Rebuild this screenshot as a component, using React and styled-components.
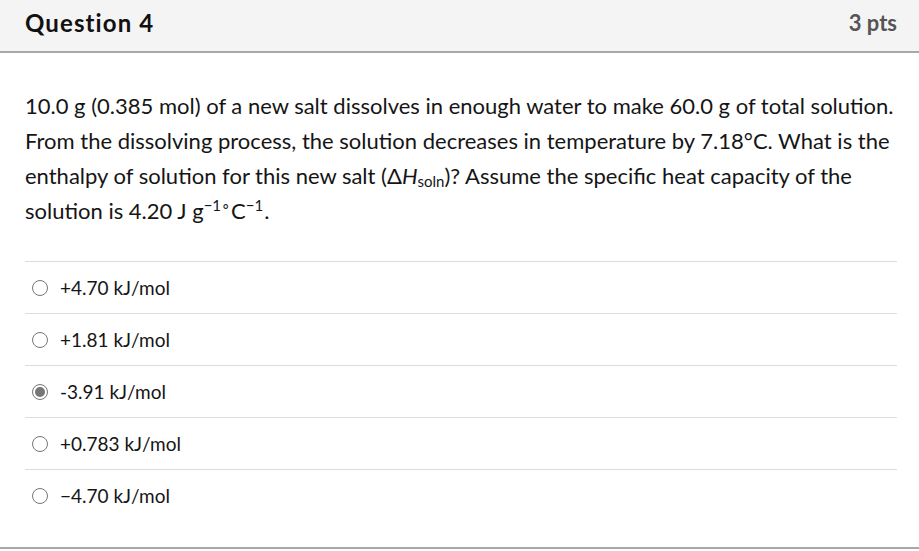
import React from 'react'
import styled, { createGlobalStyle } from 'styled-components';

const GlobalStyle = createGlobalStyle`
  html, body {
    margin: 0;
    padding: 0;
    background: #fff;
  }
  body {
    font-family: Lato, "Open Sans", sans-serif;
    color: #2d3b45;
  }
`

const Quiz = styled.div`
  width: 919px;
  height: 549px;
  box-sizing: border-box;
  border-bottom: 2px solid #a8a8a8;
`

const Header = styled.div`
  display: flex;
  justify-content: space-between;
  align-items: center;
  height: 51px;
  padding: 0 22px 0 25px;
  background: #f4f4f4;
  border-bottom: 2px solid #a8a8a8;
`

const Title = styled.h2`
  margin: 0;
  font-size: 24px;
  letter-spacing: 1.1px;
  font-weight: 700;
  color: #111;
  padding-bottom: 7px;
`

const Points = styled.span`
  font-size: 22px;
  font-weight: 700;
  color: #555;
  padding-bottom: 7px;
`

const Body = styled.div`
  padding: 35px 22px 0 25px;
`

const Text = styled.p`
  margin: 0 0 33px;
  font-size: 22px;
  line-height: 35px;
  color: #151515;

  sup, sub {
    font-size: 15px;
    line-height: 0;
  }
  sup { vertical-align: 8px; margin-right: 1px; }
  sub { vertical-align: -3px; }
`

const Answers = styled.div`
  display: flex;
  flex-direction: column;
`

const Row = styled.label`
  display: flex;
  align-items: center;
  gap: 12px;
  height: 51px;
  padding-left: 7px;
  border-top: 1px solid #dcdcdc;
  font-size: 19px;
  color: #151515;
`

const Radio = styled.span`
  width: 16px;
  height: 16px;
  box-sizing: border-box;
  border-radius: 50%;
  border: 1px solid #767676;
  background: #fff;
  display: flex;
  align-items: center;
  justify-content: center;
  &::after {
    content: "";
    width: 10px;
    height: 10px;
    border-radius: 50%;
    background: ${p => (p.$checked ? '#777' : 'transparent')};
  }
`

const answers = [
  '+4.70 kJ/mol',
  '+1.81 kJ/mol',
  '-3.91 kJ/mol',
  '+0.783 kJ/mol',
  '\u22124.70 kJ/mol',
]

export default function App() {
  const selected = 2;
  return (
    <>
      <GlobalStyle />
      <Quiz>
        <Header>
          <Title>Question 4</Title>
          <Points>3 pts</Points>
        </Header>
        <Body>
          <Text>
            10.0 g (0.385 mol) of a new salt dissolves in enough water to make 60.0 g of total solution.
            From the dissolving process, the solution decreases in temperature by 7.18°C. What is the
            enthalpy of solution for this new salt (Δ<i>H</i><sub>soln</sub>)? Assume the specific heat capacity of the
            solution is 4.20 J g<sup>−1∘</sup>C<sup>−1</sup>.
          </Text>
          <Answers>
            {answers.map((a, i) => (
              <Row key={i}>
                <Radio $checked={i === selected} />
                {a}
              </Row>
            ))}
          </Answers>
        </Body>
      </Quiz>
    </>
  )
}
